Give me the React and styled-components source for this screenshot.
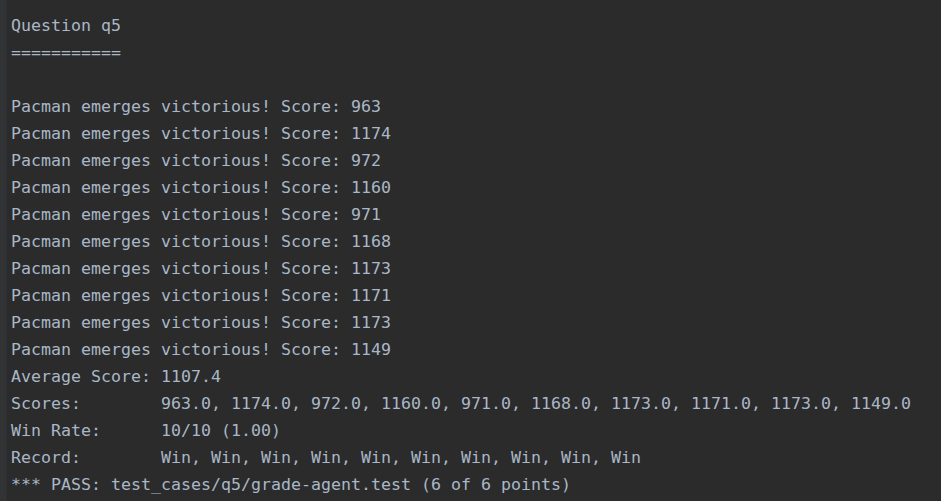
import styled, { createGlobalStyle } from "styled-components";

const GlobalStyle = createGlobalStyle`
  html, body {
    margin: 0;
    padding: 0;
    background: #2b2b2b;
  }
`;

const scores = [963, 1174, 972, 1160, 971, 1168, 1173, 1171, 1173, 1149];

function App() {
  const avg = scores.reduce((a, b) => a + b, 0) / scores.length;
  return (
    <>
      <GlobalStyle />
      <Console>
        <Gutter />
        <Output>
          <Line>Question q5</Line>
          <Line>===========</Line>
          <Line> </Line>
          {scores.map((s, i) => (
            <Line key={i}>Pacman emerges victorious! Score: {s}</Line>
          ))}
          <Line>Average Score: {avg.toFixed(1)}</Line>
          <Line>{"Scores:        "}{scores.map((s) => s.toFixed(1)).join(", ")}</Line>
          <Line>{"Win Rate:      "}10/10 (1.00)</Line>
          <Line>{"Record:        "}{scores.map(() => "Win").join(", ")}</Line>
          <Line>*** PASS: test_cases/q5/grade-agent.test (6 of 6 points)</Line>
        </Output>
      </Console>
    </>
  );
}

export default App;

const Console = styled.div`
  display: flex;
  width: 941px;
  height: 501px;
  overflow: hidden;
  background: #2b2b2b;
`;

const Gutter = styled.div`
  width: 6px;
  flex-shrink: 0;
  background: #313335;
  border-right: 1px solid #2e3032;
`;

const Output = styled.div`
  padding: 12px 0 0 4px;
  font-family: "DejaVu Sans Mono", "Liberation Mono", monospace;
  font-size: 16.61px;
  color: #a9b7c6;
`;

const Line = styled.div`
  white-space: pre;
  height: 27px;
  line-height: 27px;
`;
